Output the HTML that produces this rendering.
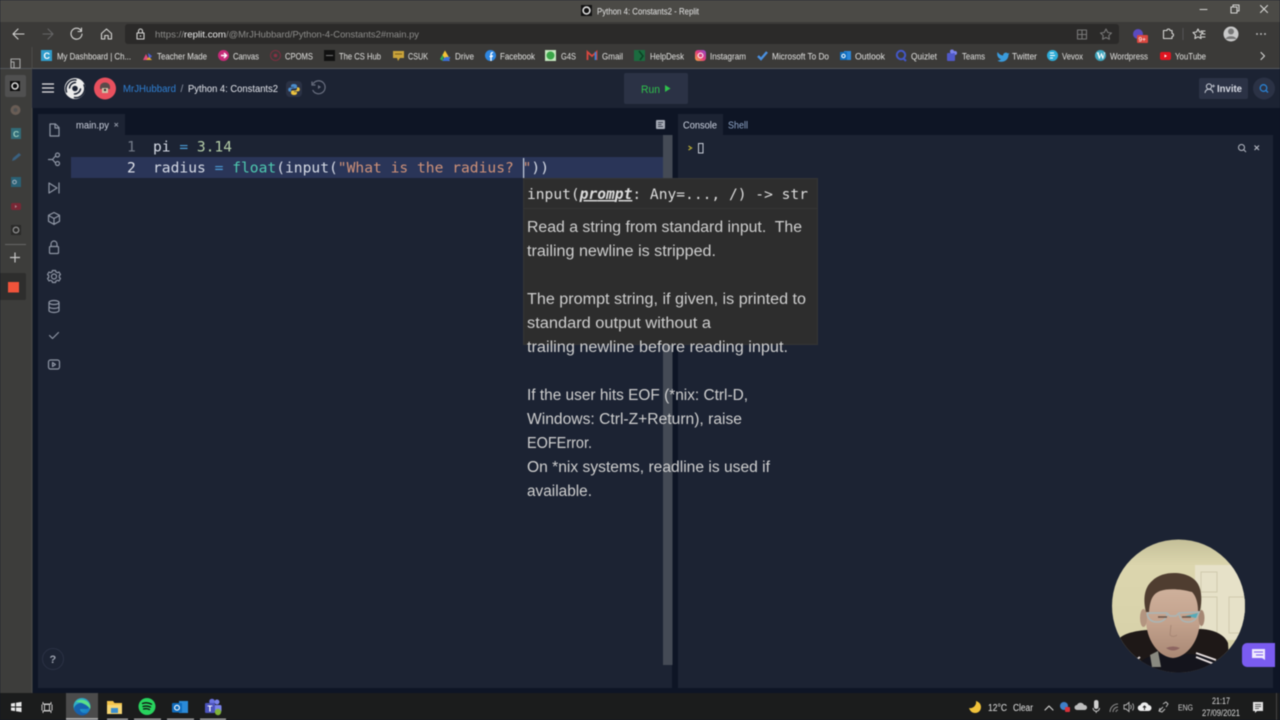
<!DOCTYPE html>
<html lang="en"><head><meta charset="utf-8"><title>Python 4: Constants2 - Replit</title>
<style>
html,body{margin:0;padding:0;background:#0e1525;width:1280px;height:720px;overflow:hidden}
svg{display:block;filter:blur(.5px)}
text{font-family:"Liberation Sans",sans-serif;white-space:pre}
.b{font-size:9.3px;fill:#e2e2e0}
.m{font-family:"DejaVu Sans Mono","Liberation Mono",monospace;font-size:14.6px}
.d{font-size:15.5px;fill:#cfcfcf}
.s{fill:none;stroke:#8f96a5;stroke-width:1.2;stroke-linecap:round;stroke-linejoin:round}
.w{fill:none;stroke:#d5d5d3;stroke-width:1.1;stroke-linecap:round;stroke-linejoin:round}
.g{fill:none;stroke:#777;stroke-width:1.1;stroke-linecap:round;stroke-linejoin:round}
.t{fill:#e4e4e4;font-size:9.2px}
</style></head><body>
<svg width="1280" height="720" viewBox="0 0 1280 720" xmlns="http://www.w3.org/2000/svg">
<defs>
<clipPath id="cam"><circle cx="1178.5" cy="606" r="66.5"/></clipPath>
<linearGradient id="wall" x1="0" y1="0" x2="0" y2="1"><stop offset="0" stop-color="#c4bf98"/><stop offset=".2" stop-color="#dcd6ae"/><stop offset="1" stop-color="#d6d0a8"/></linearGradient>
<linearGradient id="edge" x1="0" y1="0" x2="1" y2="1"><stop offset="0" stop-color="#39c0c4"/><stop offset="1" stop-color="#1270c8"/></linearGradient>
<linearGradient id="ig" x1="0" y1="1" x2="1" y2="0"><stop offset="0" stop-color="#f6b140"/><stop offset=".5" stop-color="#e23a7a"/><stop offset="1" stop-color="#8a4ad0"/></linearGradient>
<linearGradient id="skin" x1="0" y1="0" x2="0" y2="1"><stop offset="0" stop-color="#d2b5a0"/><stop offset=".55" stop-color="#c3a28d"/><stop offset="1" stop-color="#a98875"/></linearGradient>
</defs>

<!-- browser chrome -->
<rect width="1280" height="720" fill="#0e1525"/>
<rect width="1280" height="22" fill="#4b4a46"/>
<rect y="22" width="1280" height="47" fill="#3b3a38"/>
<rect x="125" y="24" width="994" height="20" rx="3" fill="#2b2a29"/>
<rect y="68" width="1280" height="1" fill="#55595e"/>
<rect y="69" width="32" height="624" fill="#3d3d3b"/>
<rect x="31.5" y="47" width="1" height="646" fill="#4c4c4a"/>

<!-- title -->
<rect x="581" y="5" width="11" height="11" fill="#111"/><circle cx="586.5" cy="10.5" r="3.4" fill="none" stroke="#ddd" stroke-width="1.6"/>
<text x="597" y="14.500" textLength="102" lengthAdjust="spacingAndGlyphs" class="t">Python 4: Constants2 - Replit</text>
<path class="w" d="M1200 9.5h7"/>
<path class="w" d="M1231 7h6v6h-6zM1233 7V5h6v6h-2"/>
<path class="w" d="M1260.500 5.500l7 7M1267.500 5.500l-7 7"/>

<!-- toolbar -->
<path class="w" d="M24 34H13M18 29l-5 5 5 5"/>
<path class="g" d="M43 34h10M48 29l5 5-5 5" style="stroke:#666"/>
<path class="w" d="M81 30.500a5.500 5.500 0 1 0 1 3.500M81.500 28v3.500h-3.500"/>
<path class="w" d="M101.500 33.500l5-4.500 5 4.500v5.500h-3.300v-3.500h-3.400v3.500h-3.300z"/>
<path class="w" d="M137 33h7v6h-7zM138.500 33v-2a2 2 0 0 1 4 0v2"/>
<circle cx="140.500" cy="36" r=".8" fill="#ddd"/>
<text x="155" y="37.500" textLength="29" lengthAdjust="spacingAndGlyphs" font-size="9.500" fill="#8d8d8b">https://</text>
<text x="184" y="37.500" textLength="42" lengthAdjust="spacingAndGlyphs" font-size="9.500" fill="#eee">replit.com</text>
<text x="226" y="37.500" textLength="193" lengthAdjust="spacingAndGlyphs" font-size="9.500" fill="#8d8d8b">/@MrJHubbard/Python-4-Constants2#main.py</text>
<path class="g" d="M1077.500 30h9v9h-9zM1082 30v9M1077.500 34.500h9"/>
<path class="g" d="M1106 29l1.800 3.500 3.700.5-2.700 2.500.6 3.700-3.400-1.700-3.400 1.700.6-3.700-2.700-2.500 3.700-.5z"/>
<circle cx="1138" cy="34" r="5" fill="#5a4bc0"/>
<rect x="1137" y="35" width="11" height="8" rx="1" fill="#d9473f"/>
<text x="1138.500" y="41.500" font-size="6.500" fill="#fff">9+</text>
<path class="w" d="M1163 31h3.500a1.500 1.500 0 0 1 3 0h2v3a1.500 1.500 0 0 1 0 3v2h-8.500z" transform="translate(.5 -.5)"/>
<path d="M1183 28v12" stroke="#555"/>
<path class="w" d="M1198 29l1.500 3 3.500.5-2.500 2.500.6 3.500-3.100-1.700-3.100 1.700.6-3.500-2.500-2.500 3.500-.5zM1201 31h4M1203 34h2M1202 37h3"/>
<circle cx="1231" cy="34" r="7.500" fill="#c9c9c9"/><circle cx="1231" cy="31.500" r="3" fill="#777"/><path d="M1225.500 39a6 4.500 0 0 1 11 0z" fill="#777"/>
<g fill="#ccc"><circle cx="1257" cy="34" r=".9"/><circle cx="1261" cy="34" r=".9"/><circle cx="1265" cy="34" r=".9"/></g>

<!-- bookmarks -->
<rect x="41" y="50" width="11" height="11" fill="#2f9ccb"/><text x="43.500" y="59" font-size="9" font-weight="bold" fill="#fff">C</text>
<text class="b" x="57" y="59.500" textLength="74" lengthAdjust="spacingAndGlyphs">My Dashboard | Ch...</text>
<path d="M143 60l3-6 3 6z" fill="#e0497a"/><path d="M148 53l4 3-3 4z" fill="#4a5fd0"/><path d="M146 60l3-3 3 3z" fill="#e4a830"/>
<text class="b" x="157" y="59.500" textLength="50" lengthAdjust="spacingAndGlyphs">Teacher Made</text>
<circle cx="223.500" cy="55.500" r="5.500" fill="#c72a78"/><path d="M221 55.500h5M224 53l2.500 2.500-2.500 2.500" stroke="#fff" stroke-width="1.400" fill="none"/>
<text class="b" x="233" y="59.500" textLength="26" lengthAdjust="spacingAndGlyphs">Canvas</text>
<circle cx="275.500" cy="55.500" r="5" fill="none" stroke="#7a2f40"/><circle cx="275.500" cy="55.500" r="1.800" fill="#8a2f45"/>
<text class="b" x="285" y="59.500" textLength="28" lengthAdjust="spacingAndGlyphs">CPOMS</text>
<rect x="324" y="50" width="11" height="11" fill="#111"/><path d="M326 55.500h7" stroke="#777"/>
<text class="b" x="339" y="59.500" textLength="42" lengthAdjust="spacingAndGlyphs">The CS Hub</text>
<path d="M393 51h11v7h-4l-2 3-1-3h-4z" fill="#c9a33a"/><path d="M395 54h7" stroke="#7a5e1c"/>
<text class="b" x="408" y="59.500" textLength="20" lengthAdjust="spacingAndGlyphs">CSUK</text>
<path d="M445 50.500l-5 8.500 2.500 2z" fill="#2faa52"/><path d="M445 50.500l5 8.500h-5l-2.500-4z" fill="#f5c236"/><path d="M442.500 61h7.500l-2-3h-4z" fill="#4a80e8"/><path d="M442.500 61l3-4h5l-2.500 4z" fill="#3a70d8"/>
<text class="b" x="455" y="59.500" textLength="19" lengthAdjust="spacingAndGlyphs">Drive</text>
<circle cx="490.500" cy="55.500" r="5.500" fill="#2e86e0"/><path d="M491 61v-5h2M489.500 56.500h3M491 56v-2a1.500 1.500 0 0 1 2-1.300" stroke="#fff" stroke-width="1.300" fill="none"/>
<text class="b" x="500" y="59.500" textLength="35" lengthAdjust="spacingAndGlyphs">Facebook</text>
<rect x="545" y="50" width="11" height="11" fill="#c5e8bf"/><circle cx="550.500" cy="55.500" r="4" fill="#3aa648"/>
<text class="b" x="561" y="59.500" textLength="15" lengthAdjust="spacingAndGlyphs">G4S</text>
<path d="M587.500 60v-8l4.500 4 4.500-4v8" fill="none" stroke="#d9473f" stroke-width="1.800"/><path d="M595.500 52v8" stroke="#3a80d8" stroke-width="1.800"/>
<text class="b" x="602" y="59.500" textLength="21" lengthAdjust="spacingAndGlyphs">Gmail</text>
<rect x="634" y="50" width="11" height="11" fill="#1b6b3f"/><path d="M639 51l4 5-3 4" stroke="#0b4024" fill="none" stroke-width="1.500"/>
<text class="b" x="650" y="59.500" textLength="34" lengthAdjust="spacingAndGlyphs">HelpDesk</text>
<rect x="695" y="50" width="11" height="11" rx="3" fill="url(#ig)"/><circle cx="700.500" cy="55.500" r="2.400" fill="none" stroke="#fff"/>
<text class="b" x="710" y="59.500" textLength="36" lengthAdjust="spacingAndGlyphs">Instagram</text>
<path d="M758 56l3 3 6-7" fill="none" stroke="#4a90e0" stroke-width="2.400"/>
<text class="b" x="772" y="59.500" textLength="57" lengthAdjust="spacingAndGlyphs">Microsoft To Do</text>
<rect x="844" y="51" width="7" height="9" fill="#2a86d8"/><rect x="840" y="52" width="7" height="8" fill="#0f6cbd"/><circle cx="843.500" cy="56" r="1.700" fill="none" stroke="#fff"/>
<text class="b" x="855" y="59.500" textLength="30" lengthAdjust="spacingAndGlyphs">Outlook</text>
<circle cx="901" cy="55" r="4.200" fill="none" stroke="#4357c8" stroke-width="2"/><path d="M903 58l3 3" stroke="#4357c8" stroke-width="2"/>
<text class="b" x="911" y="59.500" textLength="26" lengthAdjust="spacingAndGlyphs">Quizlet</text>
<circle cx="955" cy="53" r="2" fill="#7b83eb"/><rect x="947" y="53" width="8" height="8" rx="1" fill="#5059c9"/><circle cx="952" cy="51.500" r="2" fill="#7b83eb"/>
<text class="b" x="962" y="59.500" textLength="23" lengthAdjust="spacingAndGlyphs">Teams</text>
<path d="M997.500 52c2 2.500 4 3.500 5.500 3.500 0-2.500 3-4 5-2l1.500-.5-1 1.800c0 4-3 7-7 7-1.500 0-3-.4-4-1.300 1.500 0 2.500-.4 3.500-1.200-3-1-4.500-4-3.500-7.300z" fill="#3a9bdc"/>
<text class="b" x="1012" y="59.500" textLength="25" lengthAdjust="spacingAndGlyphs">Twitter</text>
<circle cx="1052.500" cy="55.500" r="5.500" fill="#2eacd8"/><path d="M1050 53h4M1050 55.500h5M1050 58h3" stroke="#fff"/>
<text class="b" x="1062" y="59.500" textLength="21" lengthAdjust="spacingAndGlyphs">Vevox</text>
<circle cx="1100.500" cy="55.500" r="5.500" fill="#3fa6bd"/><text x="1096.500" y="59" font-size="9" style="font-family:'Liberation Serif',serif" fill="#fff" font-weight="bold">W</text>
<text class="b" x="1110" y="59.500" textLength="38" lengthAdjust="spacingAndGlyphs">Wordpress</text>
<rect x="1160" y="52" width="11" height="8" rx="2" fill="#e01520"/><path d="M1164.500 54.500v3l2.500-1.500z" fill="#fff"/>
<text class="b" x="1175" y="59.500" textLength="31" lengthAdjust="spacingAndGlyphs">YouTube</text>
<path class="w" d="M1261 52.500l3.500 3.500-3.500 3.500"/>

<!-- replit top bar -->
<rect x="32" y="69" width="1248" height="39" fill="#1c2333"/>
<path d="M42 84h12M42 88h12M42 92h12" stroke="#e6e6e6" stroke-width="1.300"/>
<circle cx="75" cy="88.500" r="10.500" fill="#ececec"/>
<path d="M66.500 92a9 9 0 0 1 9.500-12M84 85a9 9 0 0 1-9.500 12.500M69.500 88a6 6 0 0 1 6-5.500M80.500 89a6 6 0 0 1-6 5" fill="none" stroke="#1c2333" stroke-width="1.500" stroke-linecap="round"/>
<circle cx="75" cy="88.500" r="2.800" fill="#1c2333"/>
<circle cx="105" cy="88.500" r="11" fill="#e8505e"/>
<path d="M100 87c0-6 10-6 10 0v2h-10z" fill="#5b4a4a"/><rect x="102" y="88" width="6" height="5" fill="#cfc2a8"/><circle cx="105" cy="90" r="1.200" fill="#333"/>
<text x="123" y="92" textLength="53" lengthAdjust="spacingAndGlyphs" font-size="10" fill="#2f80d4">MrJHubbard</text>
<text x="180.500" y="92" font-size="10" fill="#8f96a5">/</text>
<text x="188" y="92" textLength="90" lengthAdjust="spacingAndGlyphs" font-size="10" fill="#e6e8ee">Python 4: Constants2</text>
<rect x="286" y="81" width="16" height="16" rx="4" fill="#2b3245"/>
<path d="M294 84c-2.500 0-3 1-3 2v1h3v.6h-4c-1.300 0-1.800 1-1.800 2s.5 2 1.600 2h1.200v-1.500c0-1 .8-1.600 1.800-1.600h2.700c.9 0 1.500-.7 1.500-1.500V86c0-1-1-2-3-2z" fill="#4a8ccc"/>
<path d="M294 95c2.500 0 3-1 3-2v-1h-3v-.6h4c1.300 0 1.800-1 1.800-2s-.5-2-1.600-2H297v1.500c0 1-.8 1.600-1.800 1.600h-2.700c-.9 0-1.500.7-1.500 1.500V93c0 1 1 2 3 2z" fill="#ecc23e"/>
<path d="M313 84a6.500 6.500 0 1 1-.3 6" fill="none" stroke="#6a7080" stroke-width="1.200"/><path d="M312 81.500V85h3.500" fill="none" stroke="#6a7080" stroke-width="1.200"/><path d="M318 85v4l3-2z" fill="#6a7080"/>
<rect x="624" y="73" width="64" height="31" rx="2" fill="#2b3245"/>
<text x="641" y="93" textLength="19" lengthAdjust="spacingAndGlyphs" font-size="11" fill="#2fc24c">Run</text>
<path d="M665 85l5.500 3.500-5.500 3.500z" fill="#2fc24c"/>
<rect x="1199" y="78" width="49" height="21" rx="2" fill="#2b3245"/>
<circle cx="1209" cy="86.500" r="2.600" fill="none" stroke="#c6cad4"/><path d="M1205 93c0-5 8-5 8 0" fill="none" stroke="#c6cad4"/><path d="M1212 86h3M1213.500 84.500v3" stroke="#c6cad4" stroke-width=".8"/>
<text x="1217" y="92" textLength="25" lengthAdjust="spacingAndGlyphs" font-size="10.500" font-weight="bold" fill="#d8dbe4">Invite</text>
<circle cx="1264" cy="88.500" r="11" fill="#2b3245"/><circle cx="1263.500" cy="88" r="3.300" fill="none" stroke="#2a80d0" stroke-width="1.300"/><path d="M1266 90.500l2 2" stroke="#2a80d0" stroke-width="1.300"/>

<!-- browser left sidebar icons -->
<path class="w" d="M11 59h9v9h-9zM11 62h3v6" style="stroke:#a8a8a8"/>
<rect x="5" y="75" width="21" height="22" rx="2" fill="#505050"/>
<rect x="10" y="81" width="10" height="10" fill="#0c0c0c"/><circle cx="15" cy="86" r="3" fill="none" stroke="#ddd" stroke-width="1.500"/>
<g opacity=".72">
<circle cx="15.500" cy="110" r="5" fill="#7b6a60"/><circle cx="15.500" cy="110" r="2" fill="#5a5a5a"/>
<rect x="11" y="128" width="10" height="11" fill="#2d7f90"/><text x="13" y="137" font-size="8.500" fill="#bfe" font-weight="bold">C</text>
<path d="M12 161l3 -1 6-5-2-2-6 5z" fill="#3a6f9c"/>
<rect x="11" y="177" width="10" height="10" fill="#24708c"/><circle cx="14.500" cy="182" r="1.800" fill="none" stroke="#cde"/>
<rect x="11" y="203" width="10" height="7" rx="1.500" fill="#8f1f33"/><path d="M15 205v3l2-1.500z" fill="#d9b0b8"/>
<rect x="11" y="225" width="10" height="10" fill="#222"/><circle cx="16" cy="230" r="2.800" fill="none" stroke="#aaa" stroke-width="1.300"/>
</g>
<path d="M5 244.500h21" stroke="#666"/>
<path d="M10 257.500h10M15 252.500v10" stroke="#c9c9c9" stroke-width="1.200"/>
<path d="M0 273h24a2 2 0 0 1 2 2v23a2 2 0 0 1-2 2H0z" fill="#2e2e2d"/>
<rect x="8" y="282" width="11" height="10.500" fill="#f0533a"/>

<!-- panels -->
<rect x="38" y="114" width="32" height="574" fill="#1c2333"/>
<rect x="70" y="135" width="602" height="553" fill="#1c2333"/>
<rect x="70" y="114" width="55" height="21" fill="#1c2333"/>
<rect x="678" y="114" width="45" height="21" fill="#1c2333"/>
<rect x="678" y="135" width="595" height="553" fill="#1c2333"/>

<!-- rail icons -->
<g class="s">
<path class="s" d="M50 124h5.500l3.500 3.500V136H50zM55 124.500V128h3.500"/>
<path class="s" d="M48.500 159.500h4M52.500 159.500l3-3.500M52.500 159.500l3 3.500"/><circle class="s" cx="57.500" cy="155" r="2"/><circle class="s" cx="57.500" cy="163.500" r="2"/>
<path class="s" d="M49 183l8 5-8 5zM59 183v10"/>
<path class="s" d="M54 212.500l5.500 2.800v6l-5.500 3-5.500-3v-6zM48.500 215.500l5.500 3 5.500-3M54 218.500v6"/>
<rect class="s" x="49.500" y="246.500" width="9" height="7" rx="1"/><path class="s" d="M51 246.500v-2.500a3 3 0 0 1 6 0v2.500"/>
<circle class="s" cx="54" cy="276.500" r="2.500"/><path class="s" d="M52.500 270.500h3l.5 1.500 1.500.7 1.500-.7 1.500 2.500-1.200 1v2l1.200 1-1.500 2.500-1.500-.7-1.500.7-.5 1.500h-3l-.5-1.500-1.500-.7-1.500.7-1.500-2.500 1.200-1v-2l-1.200-1 1.500-2.500 1.500.7 1.500-.7z"/>
<ellipse class="s" cx="54" cy="302.500" rx="5" ry="2"/><path class="s" d="M49 302.500v8c0 1 2 2 5 2s5-1 5-2v-8M49 306.500c0 1 2 2 5 2s5-1 5-2"/>
<path class="s" d="M49.500 335.500l3 3 6-6"/>
<rect class="s" x="48.500" y="360" width="11" height="9" rx="2"/><path d="M52.500 362.500v4l3-2z" fill="none" stroke="#8f96a5"/>
</g>
<circle cx="53" cy="659" r="10.500" fill="none" stroke="#2b3245"/>
<text x="49.500" y="663" font-size="11" font-weight="bold" fill="#9ba1ae">?</text>

<!-- tabs -->
<text x="76" y="128.500" textLength="33" lengthAdjust="spacingAndGlyphs" font-size="10" fill="#cdd2df">main.py</text>
<path d="M114.500 123l3.500 3.500M118 123l-3.500 3.500" stroke="#8f96a5" stroke-width=".9"/>
<rect x="656" y="120" width="9" height="9" rx="1" fill="#a6abb6"/><path d="M658 122.500h5M658 124.500h3.500M658 126.500h5" stroke="#1c2333" stroke-width=".8"/>
<text x="683" y="128.500" textLength="34" lengthAdjust="spacingAndGlyphs" font-size="10" fill="#cfd6e4">Console</text>
<text x="728" y="128.500" textLength="20" lengthAdjust="spacingAndGlyphs" font-size="10" fill="#8fa6c8">Shell</text>
<path d="M688.500 146l3 2-3 2" fill="none" stroke="#b5a936" stroke-width="1.300"/>
<rect x="698.500" y="143.500" width="4.500" height="9.500" fill="none" stroke="#c8ccd6"/>
<circle cx="1241.500" cy="147.500" r="3" fill="none" stroke="#b8bcc6"/><path d="M1244 150l2 2" stroke="#b8bcc6"/>
<path d="M1254.500 145.500l4.500 4.500M1259 145.500l-4.500 4.500" stroke="#b8bcc6" stroke-width="1.100"/>

<!-- editor -->
<rect x="71" y="157" width="592" height="21" fill="#2a3558"/>
<rect x="663" y="135" width="9.500" height="530" fill="#444a55"/>
<text class="m" x="127" y="151.500" fill="#737a88">1</text>
<text class="m" x="127" y="172.500" fill="#dfe2ea">2</text>
<text class="m" x="153" y="151.500" textLength="79" fill="#d5dae5">pi <tspan fill="#4b9cd6">=</tspan> <tspan fill="#b5cea8">3.14</tspan></text>
<text class="m" x="153" y="172.500" textLength="396" fill="#d5dae5">radius <tspan fill="#4b9cd6">=</tspan> <tspan fill="#4ec9b0">float</tspan>(input(<tspan fill="#ce9178">"What is the radius? "</tspan>))</text>
<rect x="523" y="158" width="1.200" height="20" fill="#c8d0e0"/>

<!-- tooltip -->
<rect x="523.500" y="178.500" width="294" height="166" fill="#2d2d2d" stroke="#353535"/>
<path d="M524 208.500h293" stroke="#363636"/>
<text class="m" x="527" y="199" textLength="281" fill="#dcdcdc">input(<tspan font-weight="bold" font-style="italic" text-decoration="underline">prompt</tspan>: Any=..., /) -&gt; str</text>
<text class="d" x="527" y="232" textLength="275" lengthAdjust="spacingAndGlyphs">Read a string from standard input.  The</text>
<text class="d" x="527" y="256" textLength="189" lengthAdjust="spacingAndGlyphs">trailing newline is stripped.</text>
<text class="d" x="527" y="304" textLength="279" lengthAdjust="spacingAndGlyphs">The prompt string, if given, is printed to</text>
<text class="d" x="527" y="328" textLength="184" lengthAdjust="spacingAndGlyphs">standard output without a</text>
<text class="d" x="527" y="352" textLength="261" lengthAdjust="spacingAndGlyphs">trailing newline before reading input.</text>
<text class="d" x="527" y="400" textLength="221" lengthAdjust="spacingAndGlyphs">If the user hits EOF (*nix: Ctrl-D,</text>
<text class="d" x="527" y="424" textLength="215" lengthAdjust="spacingAndGlyphs">Windows: Ctrl-Z+Return), raise</text>
<text class="d" x="527" y="448" textLength="65" lengthAdjust="spacingAndGlyphs">EOFError.</text>
<text class="d" x="527" y="472" textLength="243" lengthAdjust="spacingAndGlyphs">On *nix systems, readline is used if</text>
<text class="d" x="527" y="496" textLength="65" lengthAdjust="spacingAndGlyphs">available.</text>

<!-- webcam -->
<g clip-path="url(#cam)">
<rect x="1112" y="539" width="134" height="134" fill="url(#wall)"/>
<rect x="1195" y="565" width="50" height="75" fill="#e6e1c8"/>
<rect x="1201" y="572" width="16" height="20" fill="none" stroke="#cfcaac"/><rect x="1201" y="597" width="16" height="36" fill="none" stroke="#cfcaac"/><rect x="1229" y="597" width="16" height="36" fill="none" stroke="#cfcaac"/>
<path d="M1118 640c5-8 25-10 30-10l52-1c10 0 24 4 28 14l2 32h-113z" fill="#1e1817"/>
<path d="M1128 680c6-20 22-24 30-26h34c12 2 30 6 38 24z" fill="#14141c"/>
<path d="M1196 653l20 7M1196 657l18 7" stroke="#e8e0e0" stroke-width="1.800"/>
<path d="M1140 657l-4 3" stroke="#d8d0d0" stroke-width="2"/>
<path d="M1150 655l8-4 3 16-9 0z" fill="#8a8a80"/>
<path d="M1146 592v30q1 14 8 24 8 11 19 12 11-1 19-12 7-10 8-24v-30q-8-14-27-14-19 0-27 14z" fill="url(#skin)"/>
<ellipse cx="1143.500" cy="618" rx="3.500" ry="9" fill="#b39580"/><ellipse cx="1201.500" cy="618" rx="3" ry="8" fill="#a58773"/>
<path d="M1146 612c-3-12-2-24 6-31 6-6 14-8 22-8 11 0 20 4 24 11 4 7 4 17 2 27l-2 0c0-8-2-15-6-19-10-3-24-4-32-1-8 3-10 10-11 21z" fill="#4f3d30"/>
<path d="M1147 613h20l3 3h6l3-3 21-1M1147 613c1 7 5 9 10 9s9-2 10-8M1179 614c1 6 5 8 9 8s9-2 11-10" fill="none" stroke="#a9b5b5" stroke-width="1.500"/>
<path d="M1185 616l13-3-2 5z" fill="#55aab8"/>
<path d="M1166 648q7-3 14 0-7 5-14 0z" fill="#8d6560"/>
<path d="M1171 625l-1 10q3 3 7 0" fill="none" stroke="#a88875"/>
<path d="M1158 617h9M1182 617h9" stroke="#6a5347" stroke-width="1.400"/>
</g>
<path d="M1247 643h28v24h-28a5 5 0 0 1-5-5v-14a5 5 0 0 1 5-5z" fill="#7a5cf0"/>
<path d="M1252 649h13v11l-3-2h-10z" fill="#efeafd"/><path d="M1254 652h9M1256 655h7" stroke="#7a5cf0" stroke-width="1"/>

<!-- taskbar -->
<rect y="693" width="1280" height="27" fill="#1b1c1c"/>
<g fill="#e8e8e8"><path d="M11 703.500l4-.6v3.600h-4zM16 702.700l5.500-.8v4.600H16zM11 707.500h4v3.600l-4-.6zM16 707.500h5.500v4.600l-5.500-.8z"/></g>
<path d="M43 702v2h8v-2M43 713v-2h8v2" fill="none" stroke="#c8c8c8"/><rect x="44.500" y="704.500" width="5" height="6" fill="none" stroke="#c8c8c8"/><path d="M42 704.500v6M52 704.500v6" stroke="#c8c8c8"/>
<rect x="66" y="693" width="32" height="27" fill="#4b4b4b"/>
<circle cx="82" cy="706.500" r="8.500" fill="url(#edge)"/><path d="M74 708c2-6 12-7 15-2 1 2-1 3-3 3h-6c0 3 3 5 8 4-2 2-5 3-7 2.500-4-1-7-4-7-7.500z" fill="#1458a8" opacity=".85"/><path d="M76 702c3-3 9-3 12 0 2 2 3 5 2 7-2-4-9-7-14-7z" fill="#5be08a"/>
<path d="M107 701h6l1.500 2h7.500v11h-15z" fill="#f3c44c"/><rect x="107" y="705" width="15" height="9" fill="#f7d774"/><rect x="111" y="708" width="7" height="5" fill="#3a8fd0"/>
<circle cx="147" cy="706.500" r="8.500" fill="#28d45e"/><path d="M142.500 703.500c3-1 6-1 9 .7M143 706.500c2.500-.7 5-.6 7.500.6M143.500 709c2-.5 4-.4 6 .5" fill="none" stroke="#111" stroke-width="1.300" stroke-linecap="round"/>
<rect x="179" y="701" width="9" height="12" fill="#2a8ad8"/><rect x="172" y="703" width="10" height="9.500" rx="1" fill="#0f6cbd"/><circle cx="177" cy="707.700" r="2.400" fill="none" stroke="#fff" stroke-width="1.100"/>
<circle cx="217" cy="702" r="2.500" fill="#7b83eb"/><rect x="213" y="705" width="8.500" height="7" rx="1.500" fill="#7b83eb"/><circle cx="212" cy="701.500" r="2.800" fill="#6a72e0"/><rect x="205" y="703" width="10" height="10" rx="1" fill="#4b53bc"/><text x="207.500" y="711.500" font-size="8" font-weight="bold" fill="#fff">T</text><circle cx="218" cy="712" r="3.200" fill="#7fb23a"/>
<g fill="#a8a8a8"><rect x="66" y="718" width="32" height="2"/><rect x="107" y="718.500" width="21" height="1.500"/><rect x="134" y="718.500" width="27" height="1.500"/><rect x="167" y="718.500" width="27" height="1.500"/><rect x="200" y="718.500" width="26" height="1.500"/></g>

<!-- tray -->
<path d="M976 701a6 6 0 0 1-7 7c1 3 3 5 6 5 4 0 6-3 6-6 0-3-2-5-5-6z" fill="#f0c23a"/>
<text x="988" y="711" textLength="19" lengthAdjust="spacingAndGlyphs" font-size="10" fill="#e4e4e4">12°C</text>
<text x="1013" y="711" textLength="20" lengthAdjust="spacingAndGlyphs" font-size="10" fill="#e4e4e4">Clear</text>
<path class="w" d="M1045 710l4-4 4 4"/>
<circle cx="1064" cy="706" r="4" fill="#3f7fc8"/><rect x="1065" y="707" width="5" height="5" rx="1" fill="#d9323a"/>
<path d="M1077 710a2.500 2.500 0 0 1 0-5c1-3 6-3 7 0a2.500 2.500 0 0 1 1 5z" fill="#bdbdbd"/>
<rect x="1094" y="700" width="4.500" height="9" rx="2.200" fill="#cfcfcf"/><path d="M1093 708a3 3 0 0 0 6.500 0M1096.200 711v2" stroke="#cfcfcf" fill="none"/>
<path d="M1110 712a8 8 0 0 1 8-8M1113 712a5 5 0 0 1 5-5M1116 712a2 2 0 0 1 2-2" fill="none" stroke="#8e8e8e"/>
<path d="M1124 705h2l3-2.500v9l-3-2.500h-2zM1130.500 705a3 3 0 0 1 0 4M1132.500 703.500a6 6 0 0 1 0 7" fill="none" stroke="#bbb" stroke-width=".9"/>
<path d="M1141 711a3 3 0 0 1-.5-6c1-3.500 7-3.500 8 0a3 3 0 0 1 0 6z" fill="#eee"/><path d="M1144.500 710v-4M1143 707.500l1.500-1.500 1.500 1.500" stroke="#222" fill="none"/>
<path d="M1159 711l4-4M1163 704l3-2 2 2-2 3M1160 708l-1 3 3 1 3-3" fill="none" stroke="#bbb"/>
<text x="1178" y="710.500" textLength="15" lengthAdjust="spacingAndGlyphs" font-size="8.500" fill="#cfcfcf">ENG</text>
<text x="1212" y="704" textLength="18" lengthAdjust="spacingAndGlyphs" font-size="9" fill="#dcdcdc">21:17</text>
<text x="1202" y="716" textLength="38" lengthAdjust="spacingAndGlyphs" font-size="9" fill="#dcdcdc">27/09/2021</text>
<path d="M1253 702h10v9h-6l-2 2v-2h-2z" fill="#e4e4e4"/><path d="M1255 704.500h6M1255 706.500h6M1255 708.500h4" stroke="#333" stroke-width=".8"/>
<path d="M1276.500 693v27" stroke="#444"/>
</svg>
</body></html>
